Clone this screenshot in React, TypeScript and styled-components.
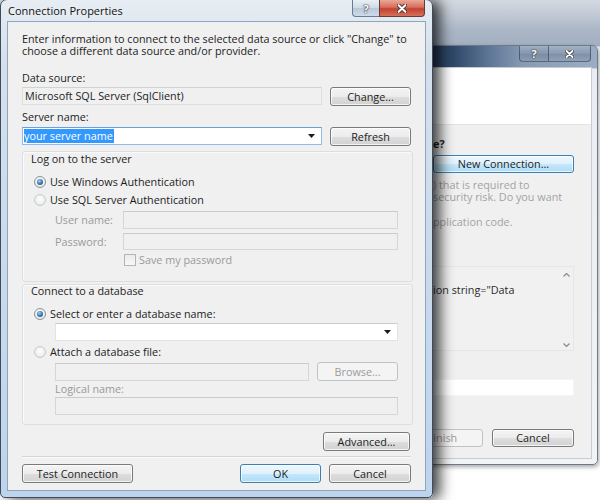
import React from "react";
import styled, { createGlobalStyle, css } from "styled-components";

const FONT = `"Open Sans", "Noto Sans", "Liberation Sans", sans-serif`;

const GlobalStyle = createGlobalStyle`
  html, body { margin: 0; padding: 0; background: #ffffff; }
  body { font-family: ${FONT}; font-size: 10.8px; color: #1c1c1c; }
  * { box-sizing: border-box; }
`;

const Desktop = styled.div`
  position: relative;
  width: 600px;
  height: 500px;
  overflow: hidden;
  background: linear-gradient(
    to bottom,
    #d3d9e1 0px,
    #c2cad6 14px,
    #aab6c6 30px,
    #a3b0c1 46px,
    #eef1f4 47px,
    #ffffff 120px
  );
`;

/* ---------- window chrome ---------- */

const BackWindow = styled.div`
  position: absolute;
  left: 412px;
  top: 45px;
  width: 186px;
  height: 420px;
  display: flex;
  flex-direction: column;
  border: 1px solid #6f7a88;
  border-radius: 6px 6px 5px 5px;
  background: linear-gradient(to bottom, #8ea0b8 0px, #a9b7c9 22px, #e9edf1 23px, #f1f3f5 100%);
  padding: 0 6px 6px 6px;
  box-shadow: 1px 2px 4px rgba(0, 0, 0, 0.35);
`;

const BackTitleBar = styled.div`
  height: 22px;
  margin: 0 -6px;
  padding: 0 6px;
  display: flex;
  justify-content: flex-end;
  align-items: flex-start;
  border-radius: 5px 5px 0 0;
  background: linear-gradient(to right, #243a58 0%, #2f4869 22%, #5b7393 40%, #889bb4 60%, #9badc2 100%);
`;

const Dialog = styled.div`
  position: absolute;
  left: 0;
  top: -1px;
  width: 433px;
  height: 499px;
  display: flex;
  flex-direction: column;
  border: 1px solid #3f4b5b;
  border-radius: 7px 7px 5px 5px;
  background: linear-gradient(to bottom, #e6edf3 0px, #d5e0ec 60px, #c8d9ec 300px, #bed4ec 100%);
  padding: 0 7px 7px 7px;
  box-shadow: 7px 1px 14px rgba(0, 0, 0, 0.75);
`;

const TitleBar = styled.div`
  height: 22px;
  display: flex;
  align-items: flex-start;
`;

const Title = styled.div`
  padding-top: 5px;
  font-size: 11px;
  line-height: 12px;
  color: #111;
  text-shadow: 0 0 6px rgba(255, 255, 255, 0.95);
`;

const CaptionButtons = styled.div`
  margin-left: auto;
  display: flex;
`;

const CaptionButton = styled.div<{ $kind: "help" | "close"; $inactive?: boolean }>`
  height: ${(p) => (p.$inactive ? 16 : 17)}px;
  display: flex;
  align-items: center;
  justify-content: center;
  font-weight: 700;
  font-size: 11px;
  color: #fff;
  text-shadow: 0 0 2px #333, 0 0 1px #000;
  ${(p) =>
    p.$kind === "help"
      ? css`
          width: ${p.$inactive ? 29 : 27}px;
          border: 1px solid ${p.$inactive ? "rgba(40,55,75,0.6)" : "#6a7a8f"};
          border-top: none;
          border-right: none;
          border-radius: 0 0 0 4px;
          background: ${p.$inactive
            ? "linear-gradient(#9fb0c4, #8596ad 50%, #7a8ca4 51%, #8a9cb2)"
            : "linear-gradient(#e9eff5, #cfdae6 50%, #b9c8d9 51%, #cddbea)"};
        `
      : css`
          width: ${p.$inactive ? 43 : 46}px;
          border: 1px solid ${p.$inactive ? "rgba(40,55,75,0.6)" : "#6b3b33"};
          border-top: none;
          border-radius: 0 0 4px 0;
          background: ${p.$inactive
            ? "linear-gradient(#a3b3c6, #8a9bb1 50%, #7e90a7 51%, #90a2b8)"
            : "linear-gradient(#eaa898, #d86e5d 45%, #c2412f 55%, #d8705a)"};
        `}
`;

const Client = styled.div`
  flex: 1;
  display: flex;
  flex-direction: column;
  background: #f0f0f0;
  padding: 11px 14px 0 14px;
  outline: 1px solid #8fa4bd;
`;

/* ---------- text ---------- */

const Instructions = styled.p`
  margin: 0;
  line-height: 12px;
  white-space: nowrap;
`;

const FieldLabel = styled.div<{ $top: number; $disabled?: boolean }>`
  margin-top: ${(p) => p.$top}px;
  line-height: 12px;
  color: ${(p) => (p.$disabled ? "#9a9a9a" : "#1c1c1c")};
`;

/* ---------- controls ---------- */

const Row = styled.div<{ $top: number }>`
  margin-top: ${(p) => p.$top}px;
  display: flex;
  align-items: flex-start;
  gap: 8px;
`;

const ReadOnlyBox = styled.div`
  width: 300px;
  height: 18px;
  border: 1px solid #dedede;
  border-top-color: #d2d2d2;
  background: #f0f0f0;
  padding-left: 2px;
  line-height: 16px;
  white-space: nowrap;
`;

const ComboBox = styled.div<{ $width: number; $focused?: boolean }>`
  width: ${(p) => p.$width}px;
  height: 18px;
  display: flex;
  align-items: center;
  border: 1px solid ${(p) => (p.$focused ? "#8fbbe6" : "#e0e3e8")};
  border-top-color: ${(p) => (p.$focused ? "#6d9fd2" : "#c9ccd2")};
  background: #ffffff;
  padding: 0 6px 0 1px;
`;

const Selection = styled.span`
  background: #3399ff;
  color: #fff;
  line-height: 14px;
  padding-right: 1px;
`;

const DropArrow = styled.svg`
  margin-left: auto;
  width: 7px;
  height: 4px;
  flex: none;
`;

const TextInput = styled.div<{ $width: number; $disabled?: boolean; $height?: number }>`
  width: ${(p) => p.$width}px;
  height: ${(p) => p.$height ?? 18}px;
  flex: none;
  border: 1px solid ${(p) => (p.$disabled ? "#d6d6d6" : "#e2e3ea")};
  border-top-color: ${(p) => (p.$disabled ? "#cbcbcb" : "#c6c8ce")};
  background: ${(p) => (p.$disabled ? "#f0f0f0" : "#ffffff")};
`;

const Button = styled.div<{ $width: number; $variant?: "normal" | "default" | "disabled"; $height?: number; $top?: number }>`
  width: ${(p) => p.$width}px;
  height: ${(p) => p.$height ?? 19}px;
  margin-top: ${(p) => p.$top ?? 0}px;
  flex: none;
  display: flex;
  align-items: center;
  justify-content: center;
  border-radius: 3px;
  line-height: 12px;
  white-space: nowrap;
  ${(p) =>
    p.$variant === "default"
      ? css`
          border: 1px solid #3c7fb1;
          background: linear-gradient(#eef7fd 0%, #dff1fc 50%, #c6e7fb 51%, #addcf5 100%);
          box-shadow: inset 0 0 0 1px rgba(255, 255, 255, 0.7);
          color: #1c1c1c;
        `
      : p.$variant === "disabled"
      ? css`
          border: 1px solid #c0c3c6;
          background: #f4f4f4;
          color: #9b9b9b;
        `
      : css`
          border: 1px solid #7a7a7a;
          background: linear-gradient(#f4f4f4 0%, #ececec 50%, #dedede 51%, #d2d2d2 100%);
          box-shadow: inset 0 0 0 1px rgba(255, 255, 255, 0.75);
          color: #1c1c1c;
        `}
`;

const ButtonRow = styled.div<{ $top: number }>`
  margin-top: ${(p) => p.$top}px;
  display: flex;
  align-items: flex-start;
  gap: 8px;
`;

const PushRight = styled.div<{ $right?: number }>`
  margin-left: auto;
  margin-right: ${(p) => p.$right ?? 0}px;
  display: flex;
  gap: 8px;
`;

const GroupBox = styled.div<{ $top: number; $height: number }>`
  margin-top: ${(p) => p.$top}px;
  margin-right: -2px;
  height: ${(p) => p.$height}px;
  flex: none;
  display: flex;
  flex-direction: column;
  border: 1px solid #dbdfe3;
  border-radius: 3px;
  box-shadow: inset 1px 1px 0 #fafafa;
  padding: 0 14px 0 8px;
`;

const GroupTitle = styled.div<{ $top: number }>`
  margin-top: ${(p) => p.$top}px;
  line-height: 12px;
`;

const OptionRow = styled.div<{ $top: number; $disabled?: boolean; $indent?: number; $gap?: number }>`
  margin-top: ${(p) => p.$top}px;
  margin-left: ${(p) => p.$indent ?? 3}px;
  display: flex;
  align-items: center;
  gap: ${(p) => p.$gap ?? 4}px;
  height: 12px;
  line-height: 12px;
  white-space: nowrap;
  color: ${(p) => (p.$disabled ? "#9a9a9a" : "#1c1c1c")};
`;

const RadioDot = styled.span<{ $checked?: boolean; $faded?: boolean }>`
  width: 12px;
  height: 12px;
  flex: none;
  border-radius: 50%;
  border: 1px solid ${(p) => (p.$faded ? "#c9cbcd" : "#8e9296")};
  background: radial-gradient(circle at 50% 40%, #ffffff 0, #eceeef 60%, #d4d7d9 100%);
  display: flex;
  align-items: center;
  justify-content: center;
  &::after {
    content: "";
    display: ${(p) => (p.$checked ? "block" : "none")};
    width: 6px;
    height: 6px;
    border-radius: 50%;
    background: radial-gradient(circle at 40% 35%, #a9d6f5 0, #3c7ab3 50%, #18406a 100%);
  }
`;

const CheckBox = styled.span`
  width: 12px;
  height: 12px;
  flex: none;
  border: 1px solid #b5b5b5;
  background: linear-gradient(#ececec, #f8f8f8);
`;

const FieldRow = styled.div<{ $top: number }>`
  margin-top: ${(p) => p.$top}px;
  margin-left: 24px;
  display: flex;
  align-items: center;
  gap: 8px;
`;

const InlineLabel = styled.span<{ $width: number }>`
  width: ${(p) => p.$width}px;
  flex: none;
  color: #9a9a9a;
  line-height: 12px;
`;

const Separator = styled.div`
  margin-top: 5px;
  height: 2px;
  border-top: 1px solid #d5d5d5;
  border-bottom: 1px solid #fbfbfb;
`;

/* ---------- back window content ---------- */

const BackClient = styled.div`
  flex: 1;
  display: flex;
  flex-direction: column;
  background: #f0f0f0;
  outline: 1px solid #c6ccd3;
`;

const BackHeader = styled.div`
  height: 57px;
  flex: none;
  background: #ffffff;
  border-bottom: 1px solid #e3e3e3;
`;

const BackBody = styled.div`
  flex: 1;
  display: flex;
  flex-direction: column;
  padding: 0 17px 0 14px;
`;

const Question = styled.div`
  margin-top: 13px;
  line-height: 12px;
  font-weight: 700;
  color: #1c1c1c;
`;

const GreyText = styled.p`
  margin: 6px 0 0 0;
  line-height: 12.4px;
  color: #a3a3a3;
  white-space: nowrap;
`;

const ListArea = styled.div`
  margin-top: 37px;
  height: 85px;
  flex: none;
  display: flex;
  border: 1px solid #e6e6e6;
  border-left: none;
  background: #f1f1f1;
`;

const ListText = styled.div`
  flex: 1;
  padding-top: 17px;
  line-height: 12px;
  color: #2a2a2a;
  white-space: nowrap;
`;

const ScrollTrack = styled.div`
  width: 13px;
  flex: none;
  display: flex;
  flex-direction: column;
  justify-content: space-between;
  align-items: center;
  padding: 6px 0 3px;
`;

const BackInput = styled.div`
  margin-top: 28px;
  height: 17px;
  flex: none;
  background: #ffffff;
  border: 1px solid #f4f4f4;
`;

const BackButtons = styled.div`
  margin-top: 33px;
  display: flex;
  justify-content: flex-end;
  gap: 9px;
`;

const XGlyph = ({ size = 9 }: { size?: number }) => (
  <svg width={size} height={size - 1} viewBox="0 0 9 8">
    <path d="M1.5 1 L7.5 7 M7.5 1 L1.5 7" stroke="#3a2b2b" strokeWidth="3.4" strokeLinecap="round" />
    <path d="M1.5 1 L7.5 7 M7.5 1 L1.5 7" stroke="#ffffff" strokeWidth="1.9" strokeLinecap="round" />
  </svg>
);

const Arrow = () => (
  <DropArrow viewBox="0 0 7 4">
    <path d="M0 0 H7 L3.5 4 Z" fill="#1a1a1a" />
  </DropArrow>
);

const Chevron = ({ up }: { up?: boolean }) => (
  <svg width="7" height="4" viewBox="0 0 7 4">
    <path d={up ? "M0.5 3.5 L3.5 0.5 L6.5 3.5" : "M0.5 0.5 L3.5 3.5 L6.5 0.5"} stroke="#8a8a8a" strokeWidth="1.2" fill="none" />
  </svg>
);

export default function App() {
  return (
    <>
      <GlobalStyle />
      <Desktop>
        <BackWindow>
          <BackTitleBar>
            <CaptionButton $kind="help" $inactive>?</CaptionButton>
            <CaptionButton $kind="close" $inactive>
              <XGlyph />
            </CaptionButton>
          </BackTitleBar>
          <BackClient>
            <BackHeader />
            <BackBody>
              <Question>e?</Question>
              <Button $width={141} $height={18} $top={5} $variant="default">
                New Connection...
              </Button>
              <GreyText>
                ) that is required to
                <br />
                security risk. Do you want
                <br />
                &nbsp;
                <br />
                pplication code.
              </GreyText>
              <ListArea>
                <ListText>ion string="Data</ListText>
                <ScrollTrack>
                  <Chevron up />
                  <Chevron />
                </ScrollTrack>
              </ListArea>
              <BackInput />
              <BackButtons>
                <Button $width={81} $height={18} $variant="disabled">
                  Finish
                </Button>
                <Button $width={82} $height={18}>
                  Cancel
                </Button>
              </BackButtons>
            </BackBody>
          </BackClient>
        </BackWindow>

        <Dialog>
          <TitleBar>
            <Title>Connection Properties</Title>
            <CaptionButtons>
              <CaptionButton $kind="help">?</CaptionButton>
              <CaptionButton $kind="close">
                <XGlyph size={10} />
              </CaptionButton>
            </CaptionButtons>
          </TitleBar>
          <Client>
            <Instructions>
              Enter information to connect to the selected data source or click "Change" to
              <br />
              choose a different data source and/or provider.
            </Instructions>

            <FieldLabel $top={15}>Data source:</FieldLabel>
            <Row $top={3}>
              <ReadOnlyBox>Microsoft SQL Server (SqlClient)</ReadOnlyBox>
              <Button $width={81}>Change...</Button>
            </Row>

            <FieldLabel $top={5}>Server name:</FieldLabel>
            <Row $top={4}>
              <ComboBox $width={300} $focused>
                <Selection>your server name</Selection>
                <Arrow />
              </ComboBox>
              <Button $width={81}>Refresh</Button>
            </Row>

            <GroupBox $top={5} $height={131}>
              <GroupTitle $top={1}>Log on to the server</GroupTitle>
              <OptionRow $top={11}>
                <RadioDot $checked />
                Use Windows Authentication
              </OptionRow>
              <OptionRow $top={6}>
                <RadioDot $faded />
                Use SQL Server Authentication
              </OptionRow>
              <FieldRow $top={5}>
                <InlineLabel $width={60}>User name:</InlineLabel>
                <TextInput $width={275} $disabled />
              </FieldRow>
              <FieldRow $top={4}>
                <InlineLabel $width={60}>Password:</InlineLabel>
                <TextInput $width={275} $disabled $height={17} />
              </FieldRow>
              <OptionRow $top={4} $disabled $indent={93} $gap={3}>
                <CheckBox />
                Save my password
              </OptionRow>
            </GroupBox>

            <GroupBox $top={2} $height={141}>
              <GroupTitle $top={0}>Connect to a database</GroupTitle>
              <OptionRow $top={11}>
                <RadioDot $checked />
                Select or enter a database name:
              </OptionRow>
              <FieldRow $top={3}>
                <ComboBox $width={343}>
                  <Arrow />
                </ComboBox>
              </FieldRow>
              <OptionRow $top={5}>
                <RadioDot $faded />
                Attach a database file:
              </OptionRow>
              <FieldRow $top={4}>
                <TextInput $width={254} $disabled />
                <Button $width={81} $variant="disabled">
                  Browse...
                </Button>
              </FieldRow>
              <FieldRow $top={2}>
                <InlineLabel $width={100}>Logical name:</InlineLabel>
              </FieldRow>
              <FieldRow $top={2}>
                <TextInput $width={343} $disabled />
              </FieldRow>
            </GroupBox>

            <ButtonRow $top={7}>
              <PushRight $right={1}>
                <Button $width={87}>Advanced...</Button>
              </PushRight>
            </ButtonRow>

            <Separator />

            <ButtonRow $top={6}>
              <Button $width={111}>Test Connection</Button>
              <PushRight>
                <Button $width={81} $variant="default">
                  OK
                </Button>
                <Button $width={82}>Cancel</Button>
              </PushRight>
            </ButtonRow>
          </Client>
        </Dialog>
      </Desktop>
    </>
  );
}
